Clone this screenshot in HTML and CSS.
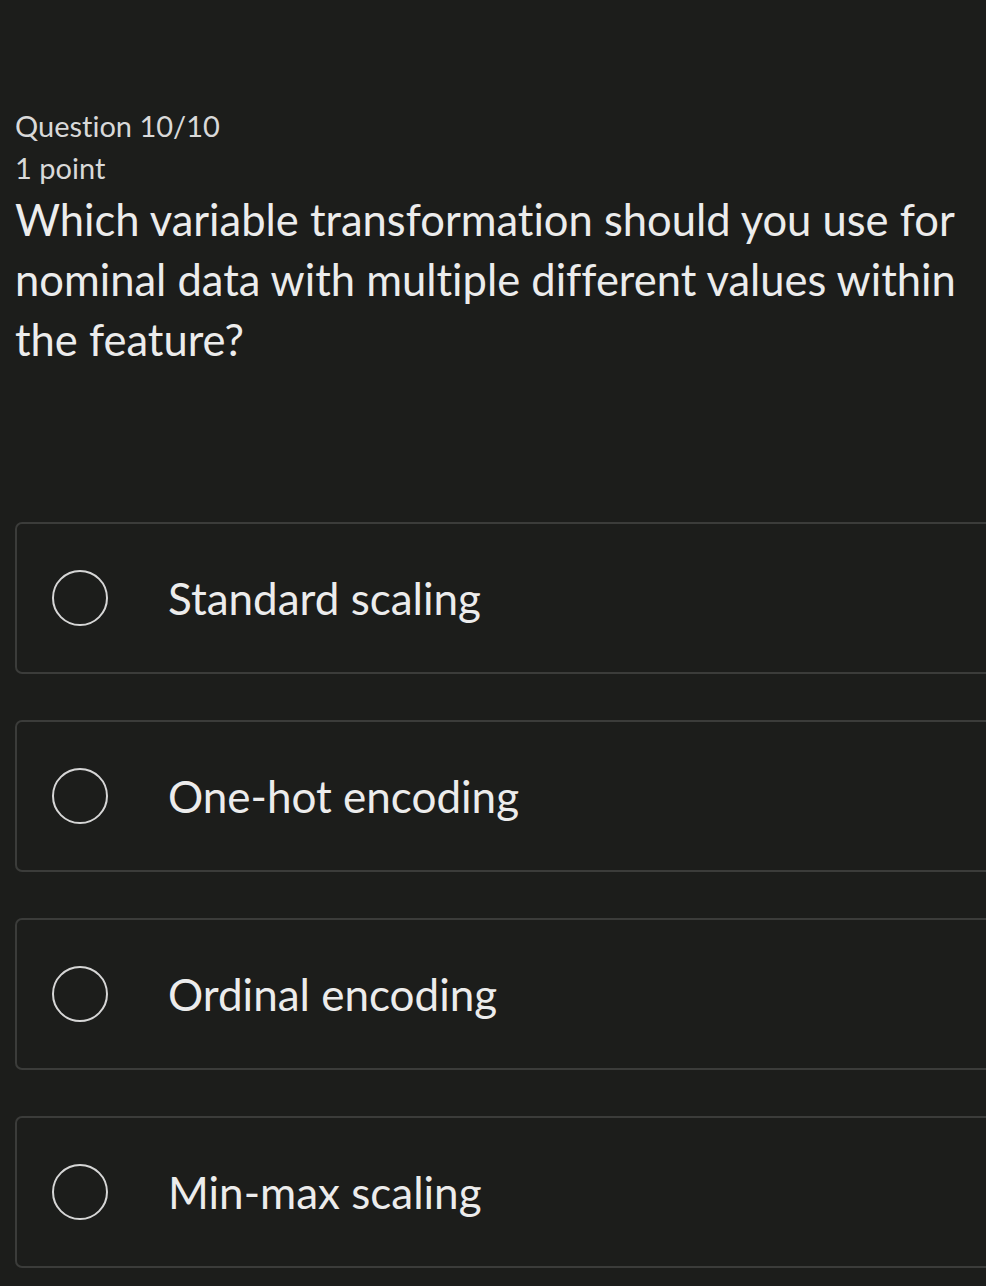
FILE: index.html
```html
<!DOCTYPE html>
<html>
<head>
<meta charset="utf-8">
<link rel="stylesheet" href="styles.css">
</head>
<body>
<main class="quiz">
  <header class="q-head">
    <div class="q-num">Question 10/10</div>
    <div class="q-points">1 point</div>
  </header>
  <h1 class="q-text">Which variable transformation should you use for nominal data with multiple different values within the feature?</h1>
  <div class="options">
    <label class="option"><span class="radio"></span><span class="opt-text">Standard scaling</span></label>
    <label class="option"><span class="radio"></span><span class="opt-text">One-hot encoding</span></label>
    <label class="option"><span class="radio"></span><span class="opt-text">Ordinal encoding</span></label>
    <label class="option"><span class="radio"></span><span class="opt-text">Min-max scaling</span></label>
  </div>
</main>
</body>
</html>
```
FILE: styles.css
```css
html, body {
  margin: 0;
  padding: 0;
  background: #1c1d1b;
  overflow: hidden;
  height: 1286px;
}
body {
  font-family: "Lato", "Noto Sans", sans-serif;
  color: #e6e6e6;
  font-variant-ligatures: none;
}
.quiz {
  padding: 105px 0 0 15px;
}
.q-num {
  font-size: 29px;
  line-height: 42px;
  color: #d9d9d9;
}
.q-points {
  font-size: 29px;
  line-height: 42px;
  color: #d9d9d9;
}
.q-text {
  margin: 0;
  font-weight: 400;
  font-size: 43.5px;
  line-height: 60px;
  color: #ececec;
  width: 965px;
}
.option, .options {
  box-sizing: content-box;
}
.options {
  margin-top: 153px;
  display: flex;
  flex-direction: column;
  gap: 46px;
  width: 1000px;
}
.option {
  display: flex;
  align-items: center;
  height: 148px;
  border: 2px solid #3b3c3a;
  border-radius: 7px;
}
.radio {
  width: 52px;
  height: 52px;
  border: 2.5px solid #d6d6d6;
  border-radius: 50%;
  margin-left: 35px;
  flex: none;
}
.opt-text {
  margin-left: 60px;
  font-size: 44px;
  color: #ececec;
}
```
